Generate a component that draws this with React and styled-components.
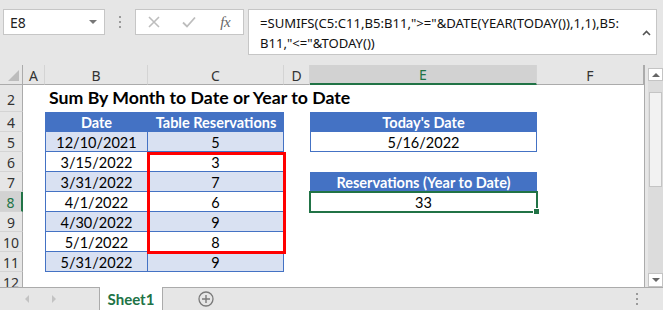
import React from 'react';
import styled, { createGlobalStyle, css } from 'styled-components';

const GREEN = '#217346';
const BLUE = '#4472c4';
const BAND = '#d9e1f2';
const HDR_BG = '#e6e6e6';
const HDR_LINE = '#ababab';
const SOFT_LINE = '#d4d4d4';

const GlobalStyle = createGlobalStyle`
  html, body { margin: 0; padding: 0; background: ${HDR_BG}; }
  body { font-family: "Lato", "Liberation Sans", sans-serif; }
`;

const Root = styled.div`
  width: 663px;
  height: 310px;
  overflow: hidden;
  background: ${HDR_BG};
  display: flex;
  flex-direction: column;
`;

/* ---------- formula bar ---------- */
const FormulaBar = styled.div`
  height: 65px;
  flex: none;
  box-sizing: border-box;
  padding: 9px 0 0 3px;
  display: flex;
  align-items: flex-start;
  font-family: "Noto Sans", "Open Sans", sans-serif;
`;

const WhiteBox = styled.div`
  background: #fff;
  border: 1px solid #c6c6c6;
  box-sizing: border-box;
`;

const NameBox = styled(WhiteBox)`
  width: 102px;
  height: 26px;
  display: flex;
  align-items: center;
  justify-content: space-between;
  padding: 0 7px 0 6px;
  font-size: 14px;
  color: #222;
`;

const DropTri = styled.span`
  width: 0;
  height: 0;
  border-left: 4px solid transparent;
  border-right: 4px solid transparent;
  border-top: 4px solid #777;
`;

const Grip = styled.div`
  width: 30px;
  height: 26px;
  display: flex;
  flex-direction: column;
  align-items: center;
  justify-content: center;
  gap: 3px;
  & > span {
    width: 2px;
    height: 2px;
    background: #9a9a9a;
  }
`;

const FxBox = styled(WhiteBox)`
  width: 109px;
  height: 26px;
  display: grid;
  grid-template-columns: repeat(3, 1fr);
  align-items: center;
  justify-items: center;
`;

const FxText = styled.span`
  font-family: "Liberation Serif", "DejaVu Serif", serif;
  font-style: italic;
  font-size: 15px;
  color: #666;
  letter-spacing: -0.5px;
`;

const FormulaBox = styled(WhiteBox)`
  margin-left: 4px;
  width: 409px;
  height: 46px;
  display: flex;
  padding: 3px 4px 0 11px;
`;

const FormulaText = styled.div`
  flex: 1;
  font-size: 13.1px;
  line-height: 20px;
  color: #111;
  white-space: nowrap;
`;

const Caret = styled.div`
  width: 10px;
  padding-top: 6px;
`;

/* ---------- sheet ---------- */
const Main = styled.div`
  height: 222px;
  flex: none;
  display: flex;
`;

const Sheet = styled.div`
  width: 645px;
  height: 222px;
  box-sizing: border-box;
  border-right: 1px solid ${HDR_LINE};
  background: #fff;
  overflow: hidden;
  display: grid;
  grid-template-columns: 23px 22px 103px 136px 26px 227px 107px;
  grid-template-rows: 20px 27px repeat(9, 20px);
`;

const placed = css`
  grid-row: ${(p) => p.$r};
  grid-column: ${(p) => p.$c};
  box-sizing: border-box;
  min-width: 0;
`;

const Corner = styled.div`
  ${placed};
  background: ${HDR_BG};
  border-right: 1px solid ${HDR_LINE};
  border-bottom: 1px solid ${HDR_LINE};
  position: relative;
  &::after {
    content: '';
    position: absolute;
    right: 3px;
    bottom: 3px;
    width: 0;
    height: 0;
    border-left: 11px solid transparent;
    border-bottom: 11px solid #bcbcbc;
  }
`;

const ColHead = styled.div`
  ${placed};
  display: flex;
  align-items: center;
  justify-content: center;
  font-family: "Noto Sans", "Open Sans", sans-serif;
  font-size: 14px;
  padding-top: 1px;
  background: ${(p) => (p.$active ? '#d2d2d2' : HDR_BG)};
  color: ${(p) => (p.$active ? GREEN : '#333')};
  border-right: 1px solid ${(p) => (p.$last ? HDR_LINE : SOFT_LINE)};
  border-bottom: ${(p) => (p.$active ? `2px solid ${GREEN}` : `1px solid ${HDR_LINE}`)};
`;

const RowHead = styled.div`
  ${placed};
  display: flex;
  align-items: center;
  justify-content: center;
  font-family: "Noto Sans", "Open Sans", sans-serif;
  font-size: 14px;
  padding-top: 2px;
  background: ${(p) => (p.$active ? '#d2d2d2' : HDR_BG)};
  color: ${(p) => (p.$active ? GREEN : '#333')};
  border-bottom: 1px solid ${SOFT_LINE};
  border-right: ${(p) => (p.$active ? `2px solid ${GREEN}` : `1px solid ${HDR_LINE}`)};
`;

const Title = styled.div`
  ${placed};
  display: flex;
  align-items: center;
  padding: 0 0 2px 4px;
  font-weight: 700;
  font-size: 17.7px;
  color: #000;
  white-space: nowrap;
`;

const variants = {
  hdr: css`
    background: ${BLUE};
    color: #fff;
    font-weight: 700;
  `,
  band: css`
    background: ${BAND};
    border-bottom: 1px solid ${BLUE};
    border-right: 1px solid ${BLUE};
  `,
  plain: css`
    background: #fff;
    border-bottom: 1px solid ${BLUE};
    border-right: 1px solid ${BLUE};
  `,
  boxed: css`
    background: #fff;
    border: 1px solid ${BLUE};
    border-top: none;
  `,
};

const Cell = styled.div`
  ${placed};
  display: flex;
  align-items: center;
  justify-content: center;
  padding-top: 1px;
  font-size: 14.5px;
  color: #000;
  white-space: nowrap;
  ${(p) => variants[p.$v]};
  ${(p) => p.$edge && css`border-left: 1px solid ${BLUE};`}
`;

const RedBox = styled.div`
  ${placed};
  z-index: 2;
  margin: 0 -2px -2px -1px;
  border: 3px solid #ff0000;
`;

const Selection = styled.div`
  ${placed};
  z-index: 3;
  margin: -1px -1px -1px -1px;
  border: 2px solid ${GREEN};
  position: relative;
  &::after {
    content: '';
    position: absolute;
    right: -4px;
    bottom: -4px;
    width: 5px;
    height: 5px;
    background: ${GREEN};
    border: 1px solid #fff;
  }
`;

/* ---------- scroll bar ---------- */
const VScroll = styled.div`
  width: 18px;
  box-sizing: border-box;
  padding: 3px 0 0 3px;
  display: flex;
  flex-direction: column;
`;

const ScrollBtn = styled.div`
  width: 15px;
  height: ${(p) => p.$h}px;
  box-sizing: border-box;
  background: #fff;
  border: 1px solid #c4c4c4;
  display: flex;
  align-items: center;
  justify-content: center;
  &::before {
    content: '';
    width: 0;
    height: 0;
    border-left: 4px solid transparent;
    border-right: 4px solid transparent;
    ${(p) =>
      p.$down
        ? css`border-top: 4px solid #666;`
        : css`border-bottom: 4px solid #666;`}
  }
`;

const Track = styled.div`
  flex: 1;
  width: 15px;
  background: #dcdcdc;
  display: flex;
  flex-direction: column;
  align-items: center;
`;

const Thumb = styled.div`
  margin-top: 11px;
  width: 13px;
  height: 95px;
  box-sizing: border-box;
  background: #f2f2f2;
  border: 1px solid #c4c4c4;
`;

/* ---------- tab bar ---------- */
const TabBar = styled.div`
  flex: 1;
  display: flex;
  align-items: stretch;
  box-shadow: inset 0 1px 0 ${HDR_LINE};
`;

const NavArea = styled.div`
  width: 99px;
  display: flex;
  align-items: center;
  padding-left: 25px;
  gap: 23px;
  box-sizing: border-box;
`;

const NavArrow = styled.span`
  width: 0;
  height: 0;
  border-top: 4px solid transparent;
  border-bottom: 4px solid transparent;
  ${(p) =>
    p.$right
      ? css`border-left: 4px solid #c3c3c3;`
      : css`border-right: 4px solid #c3c3c3;`}
`;

const SheetTab = styled.div`
  width: 64px;
  box-sizing: border-box;
  background: #fff;
  border-left: 1px solid ${HDR_LINE};
  border-right: 1px solid ${HDR_LINE};
  display: flex;
  align-items: center;
  justify-content: center;
  padding-top: 1px;
  font-weight: 700;
  font-size: 15px;
  color: ${GREEN};
`;

const AddSheet = styled.div`
  margin-left: 35px;
  display: flex;
  align-items: center;
`;

const BarGrip = styled(Grip)`
  margin-left: auto;
  margin-right: 21px;
  width: 10px;
  height: 23px;
`;

const cols = ['A', 'B', 'C', 'D', 'E', 'F'];

const tableRows = [
  { n: 5, date: '12/10/2021', val: '5', band: true },
  { n: 6, date: '3/15/2022', val: '3' },
  { n: 7, date: '3/31/2022', val: '7', band: true },
  { n: 8, date: '4/1/2022', val: '6' },
  { n: 9, date: '4/30/2022', val: '9', band: true },
  { n: 10, date: '5/1/2022', val: '8' },
  { n: 11, date: '5/31/2022', val: '9', band: true },
];

const rowNums = [2, 4, 5, 6, 7, 8, 9, 10, 11, 12];

export default function App() {
  return (
    <Root>
      <GlobalStyle />
      <FormulaBar>
        <NameBox>
          <span>E8</span>
          <DropTri />
        </NameBox>
        <Grip>
          <span />
          <span />
          <span />
        </Grip>
        <FxBox>
          <svg width="12" height="12" viewBox="0 0 12 12">
            <path d="M1 1 L11 11 M11 1 L1 11" stroke="#bdbdbd" strokeWidth="1.6" fill="none" />
          </svg>
          <svg width="14" height="12" viewBox="0 0 14 12">
            <path d="M1 6.5 L5 10.5 L13 1.5" stroke="#bdbdbd" strokeWidth="1.8" fill="none" />
          </svg>
          <FxText>fx</FxText>
        </FxBox>
        <FormulaBox>
          <FormulaText>
            =SUMIFS(C5:C11,B5:B11,"&gt;="&amp;DATE(YEAR(TODAY()),1,1),B5:
            <br />
            B11,"&lt;="&amp;TODAY())
          </FormulaText>
          <Caret>
            <svg width="9" height="6" viewBox="0 0 9 6">
              <path d="M1 5 L4.5 1.5 L8 5" stroke="#555" strokeWidth="1.6" fill="none" />
            </svg>
          </Caret>
        </FormulaBox>
      </FormulaBar>

      <Main>
        <Sheet>
          <Corner $r={1} $c={1} />
          {cols.map((c, i) => (
            <ColHead key={c} $r={1} $c={i + 2} $active={c === 'E'} $last={c === 'F'}>
              {c}
            </ColHead>
          ))}
          {rowNums.map((n, i) => (
            <RowHead key={n} $r={i + 2} $c={1} $active={n === 8}>
              {n}
            </RowHead>
          ))}

          <Title $r={2} $c="3 / 8">Sum By Month to Date or Year to Date</Title>

          <Cell $r={3} $c={3} $v="hdr">Date</Cell>
          <Cell $r={3} $c={4} $v="hdr">Table Reservations</Cell>
          {tableRows.map((row, i) => (
            <React.Fragment key={row.n}>
              <Cell $r={i + 4} $c={3} $v={row.band ? 'band' : 'plain'} $edge>
                {row.date}
              </Cell>
              <Cell $r={i + 4} $c={4} $v={row.band ? 'band' : 'plain'}>
                {row.val}
              </Cell>
            </React.Fragment>
          ))}

          <Cell $r={3} $c={6} $v="hdr">Today's Date</Cell>
          <Cell $r={4} $c={6} $v="boxed">5/16/2022</Cell>
          <Cell $r={6} $c={6} $v="hdr">Reservations (Year to Date)</Cell>
          <Cell $r={7} $c={6} $v="boxed">33</Cell>

          <RedBox $r="5 / 10" $c={4} />
          <Selection $r={7} $c={6} />
        </Sheet>
        <VScroll>
          <ScrollBtn $h={13} />
          <Track>
            <Thumb />
          </Track>
          <ScrollBtn $h={14} $down />
        </VScroll>
      </Main>

      <TabBar>
        <NavArea>
          <NavArrow />
          <NavArrow $right />
        </NavArea>
        <SheetTab>Sheet1</SheetTab>
        <AddSheet>
          <svg width="16" height="16" viewBox="0 0 16 16">
            <circle cx="8" cy="8" r="7" stroke="#7a7a7a" strokeWidth="1.3" fill="none" />
            <path d="M8 4 V12 M4 8 H12" stroke="#7a7a7a" strokeWidth="1.4" />
          </svg>
        </AddSheet>
        <BarGrip>
          <span />
          <span />
          <span />
        </BarGrip>
      </TabBar>
    </Root>
  );
}
